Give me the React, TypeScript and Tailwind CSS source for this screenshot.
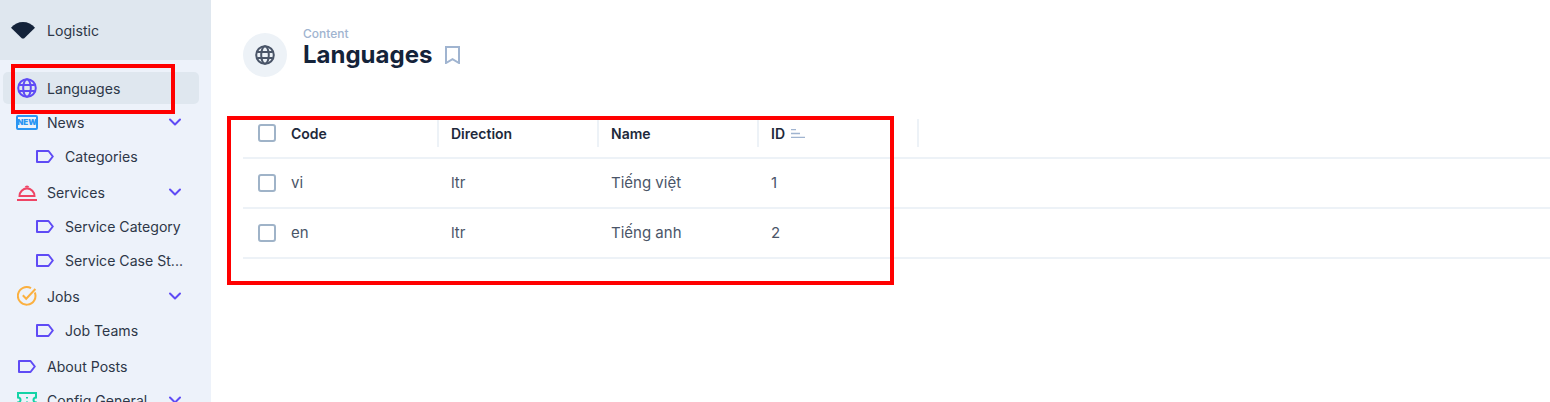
import { ChevronDown } from "lucide-react";

function Globe({ className }: { className: string }) {
  return (
    <svg viewBox="0 0 20 20" fill="none" stroke="currentColor" strokeWidth="2" className={className}>
      <circle cx="10" cy="10" r="8.8" />
      <ellipse cx="10" cy="10" rx="3.8" ry="8.8" />
      <path d="M2.2 7h15.6M2.2 13h15.6" />
    </svg>
  );
}

function Tag({ className }: { className: string }) {
  return (
    <svg viewBox="0 0 18 13" fill="none" stroke="#5f4bf5" strokeWidth="2" strokeLinejoin="round" className={className}>
      <path d="M1 1h11.500l4.300 5.500-4.300 5.500H1z" />
    </svg>
  );
}

function NewIcon() {
  return (
    <div className="w-[22px] h-[15px] border-2 border-[#2b96f3] rounded-[2px] flex items-center justify-center">
      <span className="text-[8px] leading-[9px] font-black text-[#2b96f3]">NEW</span>
    </div>
  );
}

function ServiceIcon() {
  return (
    <svg viewBox="0 0 20 17" fill="none" stroke="#ef4565" strokeWidth="2" className="w-5 h-[17px]">
      <path d="M2.500 12a7.500 7.500 0 0 1 15 0z" />
      <path d="M8.500 3.500a1.600 1.600 0 0 1 3 0" />
      <path d="M0 16h20" />
    </svg>
  );
}

function JobIcon() {
  return (
    <svg viewBox="0 0 20 20" fill="none" stroke="#fbb040" strokeWidth="2" className="w-5 h-5">
      <path d="M17.800 6.500A8.800 8.800 0 1 1 14 2.200" />
      <path d="M5.800 9.200l3.400 3.600L18.400 3" />
    </svg>
  );
}

function ConfigIcon() {
  return (
    <svg viewBox="0 0 20 16" fill="none" stroke="#14d3a6" strokeWidth="2" className="w-5 h-4">
      <path d="M1 1h18v4.500a2.500 2.500 0 0 0 0 5V15H1v-4.500a2.500 2.500 0 0 0 0-5z" />
      <path d="M10 5v1.500M10 9.500v1.500" />
    </svg>
  );
}

function Item({ icon, label, chevron, sub, gap }: { icon: React.ReactNode; label: string; chevron?: boolean; sub?: boolean; gap?: boolean }) {
  return (
    <div className={`h-[34px] flex items-center shrink-0 ${gap ? "mt-[2px]" : ""} ${sub ? "pl-[35px]" : "pl-[17px]"}`}>
      <div className="w-5 flex justify-center shrink-0">{icon}</div>
      <span className="ml-[10px] pt-[2px] text-[14.1px] text-[#2d3748] whitespace-nowrap">{label}</span>
      {chevron && <ChevronDown className="w-5 h-5 text-[#5f4bf5] ml-auto mr-[26px]" strokeWidth={2.4} />}
    </div>
  );
}

function HeadCell({ label, sort }: { label: string; sort?: boolean }) {
  return (
    <div className="w-[160px] h-[28px] border-r-2 border-[#edf2f7] flex items-center pl-[12px] gap-[6px]">
      <span className="text-[14px] font-semibold text-[#1e293b]">{label}</span>
      {sort && (
        <svg viewBox="0 0 14 9" fill="none" stroke="#a0b4d0" strokeWidth="1.300" className="w-[14px] h-[9px]">
          <path d="M0 .5h5M0 4.500h9M0 8.500h14" />
        </svg>
      )}
    </div>
  );
}

function Check() {
  return <div className="w-[18px] h-[18px] border-2 border-[#9fb3c8] rounded-[3px] bg-white" />;
}

function Row({ code, dir, name, id }: { code: string; dir: string; name: string; id: string }) {
  return (
    <div className="h-[50px] border-b-2 border-[#edf2f7] flex items-center text-[15px] text-[#4a5568]">
      <div className="w-[48px] pl-[15px]"><Check /></div>
      <div className="w-[148px]">{code}</div>
      <div className="w-[160px] pl-[12px]">{dir}</div>
      <div className="w-[160px] pl-[12px]">{name}</div>
      <div className="w-[160px] pl-[12px]">{id}</div>
    </div>
  );
}

export default function App() {
  return (
    <div className="relative h-screen overflow-hidden flex bg-white font-['Inter',sans-serif]">
      <aside className="w-[211px] shrink-0 bg-[#edf2fa] flex flex-col">
        <div className="h-[60px] shrink-0 bg-[#dfe7ef] flex items-center pl-[11px] mb-[11px]">
          <svg viewBox="0 0 24 17" className="w-6 h-[17px] mt-[1px]" fill="#14233a">
            <path d="M0 5.800Q5 0 12 0t12 5.800L13 16.500h-2z" />
          </svg>
          <span className="ml-3 pt-[2px] text-[14.1px] text-[#2d3748]">Logistic</span>
        </div>
        <div className="h-[34px] shrink-0 py-px pl-[3px] pr-3">
          <div className="h-full bg-[#dfe7ef] rounded-[5px] flex items-center pl-[14px]">
            <Globe className="w-5 h-5 text-[#5f4bf5]" />
            <span className="ml-[10px] pt-[2px] text-[14.1px] text-[#2d3748]">Languages</span>
          </div>
        </div>
        <Item icon={<NewIcon />} label="News" chevron />
        <Item sub icon={<Tag className="w-[18px] h-[13px]" />} label="Categories" />
        <Item gap icon={<ServiceIcon />} label="Services" chevron />
        <Item sub icon={<Tag className="w-[18px] h-[13px]" />} label="Service Category" />
        <Item sub icon={<Tag className="w-[18px] h-[13px]" />} label="Service Case St..." />
        <Item gap icon={<JobIcon />} label="Jobs" chevron />
        <Item sub icon={<Tag className="w-[18px] h-[13px]" />} label="Job Teams" />
        <Item gap icon={<Tag className="w-[18px] h-[13px]" />} label="About Posts" />
        <Item icon={<ConfigIcon />} label="Config General" chevron />
      </aside>

      <main className="flex-1 min-w-0 pt-[23px] pl-[32px]">
        <div className="flex items-start h-[54px]">
          <div className="w-[44px] h-[44px] mt-[10px] rounded-full bg-[#edf2f7] flex items-center justify-center">
            <Globe className="w-5 h-5 text-[#4a5568]" />
          </div>
          <div className="ml-4 mt-[4px]">
            <div className="text-[12px] leading-[14px] font-medium text-[#a0b4d0]">Content</div>
            <div className="flex items-center leading-[28px]">
              <span className="text-[24px] font-bold text-[#14233a]">Languages</span>
              <svg viewBox="0 0 15 18" fill="none" stroke="#a0b4d0" strokeWidth="2" className="ml-[13px] w-[15px] h-[18px]">
                <path d="M1 1h13v16l-6.500-3.800L1 17z" />
              </svg>
            </div>
          </div>
        </div>

        <div className="mt-[32px]">
          <div className="h-[50px] border-b-2 border-[#edf2f7] flex items-center">
            <div className="w-[48px] pl-[15px]"><Check /></div>
            <div className="w-[148px] h-[28px] border-r-2 border-[#edf2f7] flex items-center">
              <span className="text-[14px] font-semibold text-[#1e293b]">Code</span>
            </div>
            <HeadCell label="Direction" />
            <HeadCell label="Name" />
            <HeadCell label="ID" sort />
          </div>
          <Row code="vi" dir="ltr" name="Tiếng việt" id="1" />
          <Row code="en" dir="ltr" name="Tiếng anh" id="2" />
        </div>
      </main>

      <div className="absolute left-[11px] top-[64px] w-[164px] h-[50px] border-[4px] border-[#ff0000]" />
      <div className="absolute left-[227px] top-[116px] w-[667px] h-[169px] border-[4px] border-[#ff0000]" />
    </div>
  );
}
